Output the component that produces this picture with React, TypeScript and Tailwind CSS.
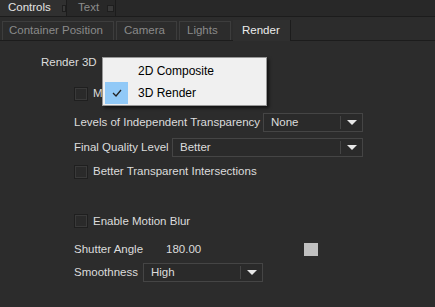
import React from "react";

function Check({ label }: { label: string }) {
  return (
    <div className="flex items-center gap-[5px]">
      <div className="w-[14px] h-[14px] border border-[#1f1f1f] bg-[#2a2a2a] shadow-[inset_0_0_0_1px_#3a3a3a]" />
      <span>{label}</span>
    </div>
  );
}

function Select({ value, width }: { value: string; width: string }) {
  return (
    <div className={`${width} h-[19px] flex items-center border border-[#454545] bg-[#2a2a2a] pl-[7px]`}>
      <span className="flex-1">{value}</span>
      <div className="w-px h-[13px] bg-[#454545]" />
      <div className="w-[21px] flex justify-center">
        <div className="w-0 h-0 border-l-[5px] border-r-[5px] border-t-[5px] border-l-transparent border-r-transparent border-t-[#e8e8e8]" />
      </div>
    </div>
  );
}

export default function App() {
  return (
    <div
      className="relative w-[435px] h-[307px] bg-[#2c2c2c] text-[11.5px] text-[#dcdcdc] whitespace-nowrap overflow-hidden"
      style={{ fontFamily: "'Liberation Sans', Arial, sans-serif" }}
    >
      {/* top tabs */}
      <div className="flex h-[17px] border-b border-[#1c1c1c] bg-[#282828]">
        <div className="flex items-center gap-[11px] w-[67px] pl-[8px] bg-[#303030] border-r border-[#1c1c1c] text-[#e4e4e4]">
          <span>Controls</span>
          <div className="w-[7px] h-[7px] bg-[#3a3a3a] border border-[#1e1e1e]" />
        </div>
        <div className="flex items-center gap-[8px] w-[49px] pl-[11px] border-r border-[#1c1c1c] text-[#8c8c8c]">
          <span>Text</span>
          <div className="w-[7px] h-[7px] bg-[#3a3a3a] border border-[#1e1e1e]" />
        </div>
      </div>

      {/* sub tabs */}
      <div className="flex items-end h-[24px] pl-[2px] gap-[2px] border-b border-[#1c1c1c]">
        <div className="w-[112px] h-[19px] flex items-center pl-[6px] border border-b-0 border-[#3d3d3d] text-[#8a8a8a]">Container Position</div>
        <div className="w-[61px] h-[19px] flex items-center pl-[7px] border border-b-0 border-[#3d3d3d] text-[#8a8a8a]">Camera</div>
        <div className="w-[52px] h-[19px] flex items-center pl-[7px] border border-b-0 border-[#3d3d3d] text-[#8a8a8a]">Lights</div>
        <div className="w-[58px] h-[21px] flex items-center pl-[9px] bg-[#2f2f2f] border-r border-[#1c1c1c] -mb-px text-[#ececec]">Render</div>
      </div>

      {/* content */}
      <div className="pl-[41px] pt-[14px]">
        <div className="h-[16px] flex items-center">Render 3D</div>
        <div className="pl-[33px]">
          <div className="mt-[14px]"><Check label="Ma" /></div>
          <div className="mt-[11px] flex items-center h-[19px]">
            <span className="w-[189px]">Levels of Independent Transparency</span>
            <Select value="None" width="w-[100px]" />
          </div>
          <div className="mt-[6px] flex items-center h-[19px]">
            <span className="w-[98px]">Final Quality Level</span>
            <Select value="Better" width="w-[191px]" />
          </div>
          <div className="mt-[6px]"><Check label="Better Transparent Intersections" /></div>
          <div className="mt-[32px]"><Check label="Enable Motion Blur" /></div>
          <div className="mt-[13px] flex items-center h-[14px]">
            <span className="w-[92px]">Shutter Angle</span>
            <span className="w-[138px]">180.00</span>
            <div className="w-[14px] h-[13px] bg-[#c0c0c0]" />
          </div>
          <div className="mt-[6px] flex items-center h-[19px]">
            <span className="w-[69px]">Smoothness</span>
            <Select value="High" width="w-[120px]" />
          </div>
        </div>
      </div>

      {/* popup menu */}
      <div className="absolute left-[102px] top-[57px] w-[165px] h-[49px] bg-[#f0f0f0] border border-[#979797] shadow-[2px_2px_3px_rgba(0,0,0,0.6)] text-[#000] text-[12px] pt-[2px] px-[2px]">
        <div className="h-[22px] flex items-center pl-[33px]">2D Composite</div>
        <div className="h-[22px] flex items-center">
          <div className="w-[23px] h-[22px] bg-[#91c9f7] flex items-center justify-center">
            <svg width="10" height="8" viewBox="0 0 10 8">
              <path d="M1 4 L4 7 L9 1" fill="none" stroke="#222" strokeWidth="1.3" />
            </svg>
          </div>
          <span className="pl-[10px]">3D Render</span>
        </div>
      </div>
    </div>
  );
}
